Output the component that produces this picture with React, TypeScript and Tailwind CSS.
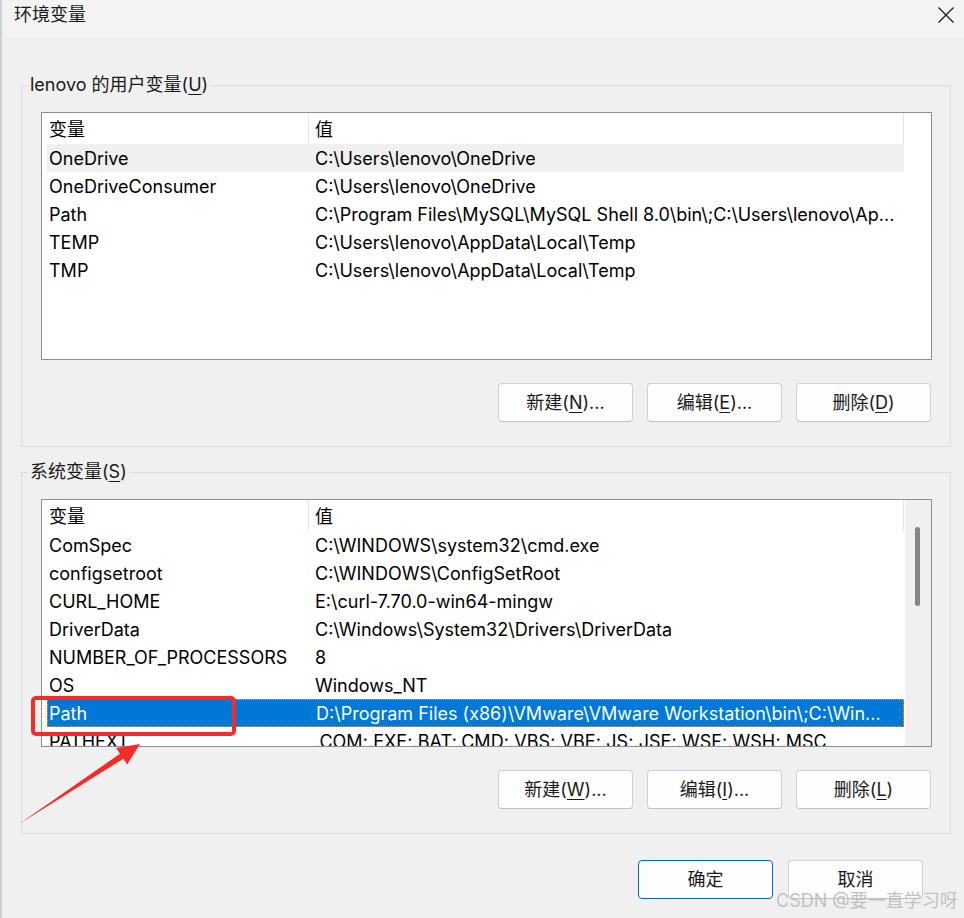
import type { ReactNode } from 'react';

type Row = { name: string; value: string; state?: 'active' | 'inactive' };

const userVars: Row[] = [
  { name: 'OneDrive', value: 'C:\\Users\\lenovo\\OneDrive', state: 'inactive' },
  { name: 'OneDriveConsumer', value: 'C:\\Users\\lenovo\\OneDrive' },
  { name: 'Path', value: 'C:\\Program Files\\MySQL\\MySQL Shell 8.0\\bin\\;C:\\Users\\lenovo\\Ap...' },
  { name: 'TEMP', value: 'C:\\Users\\lenovo\\AppData\\Local\\Temp' },
  { name: 'TMP', value: 'C:\\Users\\lenovo\\AppData\\Local\\Temp' },
];

const systemVars: Row[] = [
  { name: 'ComSpec', value: 'C:\\WINDOWS\\system32\\cmd.exe' },
  { name: 'configsetroot', value: 'C:\\WINDOWS\\ConfigSetRoot' },
  { name: 'CURL_HOME', value: 'E:\\curl-7.70.0-win64-mingw' },
  { name: 'DriverData', value: 'C:\\Windows\\System32\\Drivers\\DriverData' },
  { name: 'NUMBER_OF_PROCESSORS', value: '8' },
  { name: 'OS', value: 'Windows_NT' },
  { name: 'Path', value: 'D:\\Program Files (x86)\\VMware\\VMware Workstation\\bin\\;C:\\Win...', state: 'active' },
  { name: 'PATHEXT', value: '.COM;.EXE;.BAT;.CMD;.VBS;.VBE;.JS;.JSE;.WSF;.WSH;.MSC' },
];

// label with an underlined access key, e.g. 新建(N)...
function Mn({ pre, k, post = '' }: { pre: string; k: string; post?: string }) {
  return (
    <>
      {pre}(<span className="underline underline-offset-[3px] decoration-1">{k}</span>){post}
    </>
  );
}

function Btn({ children, primary }: { children: ReactNode; primary?: boolean }) {
  return (
    <button
      className={
        'w-[135px] h-[39px] pt-[1px] rounded-[4px] bg-[#fdfdfd] border text-[18px] leading-none text-[#1a1a1a] flex items-center justify-center ' +
        (primary ? 'border-[#0067c0]' : 'border-[#d0d0d0] border-b-[#c0c0c0]')
      }
    >
      {children}
    </button>
  );
}

function VarList({ rows, scroll }: { rows: Row[]; scroll?: boolean }) {
  return (
    <div className="h-[248px] border border-[#8b8f94] bg-white flex overflow-hidden">
      <div className="w-[863px] pl-[5px] overflow-hidden">
        <div className="flex h-[31px] items-center w-[857px]">
          <div className="w-[262px] h-full pl-[2px] pt-[2px] flex items-center border-r border-[#e5e5e5]">变量</div>
          <div className="w-[595px] h-full pl-[6px] pt-[2px] flex items-center border-r border-[#e5e5e5]">值</div>
        </div>
        {rows.map((r) => (
          <div
            key={r.name}
            className={
              'flex h-[28px] items-center w-[857px] whitespace-nowrap ' +
              (r.state === 'active'
                ? 'bg-[#0078d7] text-white border border-dotted border-[#e9a23b]'
                : r.state === 'inactive'
                  ? 'bg-[#f0f0f0]'
                  : '')
            }
          >
            <div className={'w-[266px] overflow-hidden ' + (r.state === 'active' ? 'pl-[1px]' : 'pl-[2px]')}>{r.name}</div>
            <div className="flex-1 overflow-hidden pl-[2px]">{r.value}</div>
          </div>
        ))}
      </div>
      {scroll && (
        <div className="w-[26px] bg-[#f0f0f0] pt-[27px] pl-[10px]">
          <div className="w-[5px] h-[79px] rounded-full bg-[#858585]" />
        </div>
      )}
    </div>
  );
}

function Group({ label, children }: { label: ReactNode; children: ReactNode }) {
  return (
    <fieldset className="border border-[#dcdcdc] p-0 m-0">
      <legend className="ml-[6px] px-[2px] leading-[24px] text-[18px] text-[#1a1a1a]">{label}</legend>
      <div className="pl-[19px] pr-[18px] pb-[24px] pt-[15px]">{children}</div>
    </fieldset>
  );
}

export default function App() {
  return (
    <div className="relative w-[964px] h-[918px] overflow-hidden bg-[#f0f0f0] flex text-[18px] text-black font-['Inter','Noto_Sans_CJK_SC',sans-serif]">
      <div className="w-[2px] bg-[#cfcfcf]" />
      <div className="flex-1 flex flex-col">
        <div className="h-[37px] bg-[#f3f3f3] flex items-center justify-between pl-[12px] pr-[10px]">
          <span className="text-[18px] leading-none text-[#1a1a1a] -mt-[7px]">环境变量</span>
          <svg width="16" height="16" viewBox="0 0 16 16" className="-mt-[7px]">
            <path d="M0.5 0.5 L15.5 15.5 M15.5 0.5 L0.5 15.5" stroke="#1a1a1a" strokeWidth="1.3" fill="none" />
          </svg>
        </div>

        <div className="ml-[19px] mr-[13px] mt-[36px]">
          <Group label={<>lenovo 的用户变量<Mn pre="" k="U" /></>}>
            <VarList rows={userVars} />
            <div className="mt-[23px] flex justify-end gap-[14px] mr-[1px]">
              <Btn><Mn pre="新建" k="N" post="..." /></Btn>
              <Btn><Mn pre="编辑" k="E" post="..." /></Btn>
              <Btn><Mn pre="删除" k="D" /></Btn>
            </div>
          </Group>
        </div>

        <div className="ml-[19px] mr-[13px] mt-[13px]">
          <Group label={<Mn pre="系统变量" k="S" />}>
            <VarList rows={systemVars} scroll />
            <div className="mt-[23px] flex justify-end gap-[14px] mr-[1px]">
              <Btn><Mn pre="新建" k="W" post="..." /></Btn>
              <Btn><Mn pre="编辑" k="I" post="..." /></Btn>
              <Btn><Mn pre="删除" k="L" /></Btn>
            </div>
          </Group>
        </div>

        <div className="mt-[26px] mr-[41px] flex justify-end gap-[15px]">
          <Btn primary>确定</Btn>
          <Btn>取消</Btn>
        </div>
      </div>

      {/* annotation: red box + arrow */}
      <div className="absolute left-[31px] top-[696px] w-[205px] h-[40px] border-[4px] border-[#f52a2a] rounded-[5px]" />
      <svg className="absolute left-0 top-[730px]" width="160" height="110" viewBox="0 730 160 110">
        <polygon points="19,824 120,753.7 116.2,747.9 140,744 127.2,764.5 123.4,758.7" fill="#f52a2a" />
      </svg>

      <div className="absolute left-[776px] top-[890px] text-[18px] leading-[22px] text-[#c2c2c2] whitespace-nowrap">
        CSDN @要一直学习呀
      </div>
    </div>
  );
}
